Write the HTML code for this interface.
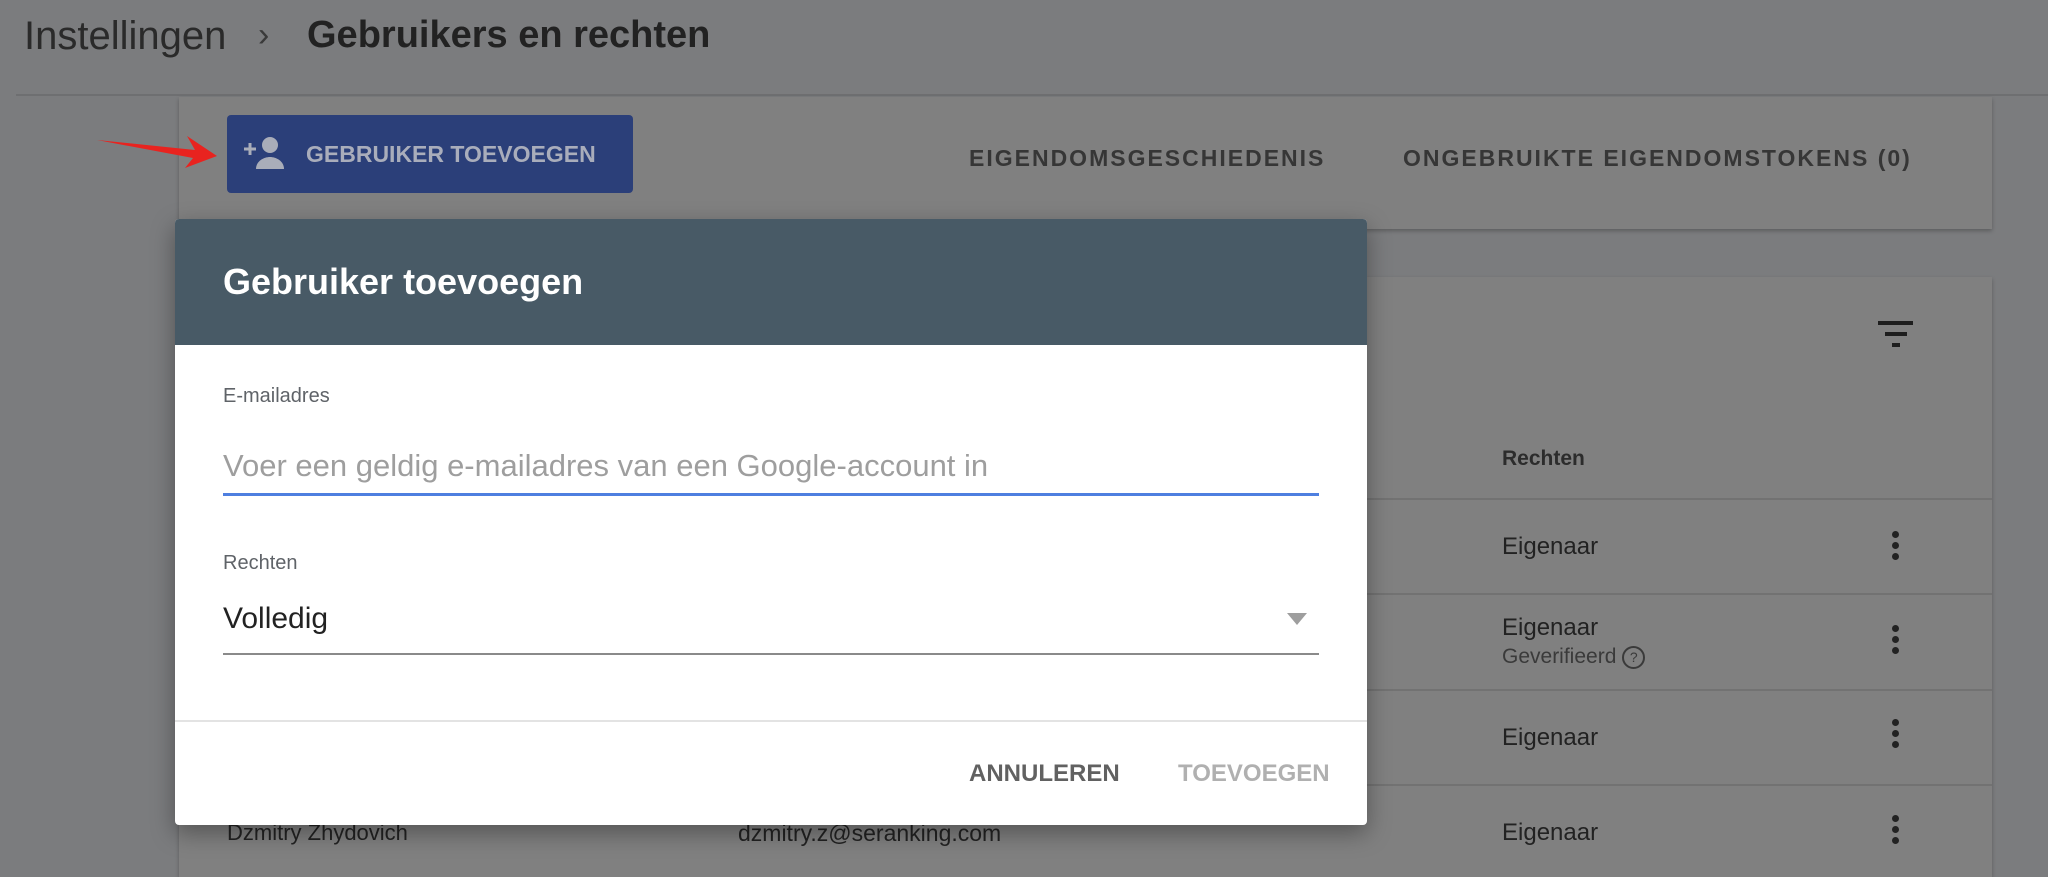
<!DOCTYPE html>
<html><head><meta charset="utf-8"><style>
*{margin:0;padding:0;box-sizing:border-box}
body{width:2048px;height:855px;overflow:hidden;background:#7b7c7e;font-family:"Liberation Sans",Arial,sans-serif;position:relative}
.a{position:absolute;white-space:nowrap}
.card{position:absolute;background:#808080;box-shadow:0 2px 4px rgba(0,0,0,.25)}
.line{position:absolute;height:2px;background:#727272}
.eig{font-size:24px;color:#222;left:1502px}
.keb{position:absolute;left:1892px;width:8px}
.keb i{display:block;width:7px;height:7px;border-radius:50%;background:#222;margin-bottom:4px}
</style></head><body>
<div class="a" style="left:24px;top:14px;font-size:40px;color:#2a2a2a">Instellingen</div>
<div class="a" style="left:258px;top:16px;font-size:34px;color:#3a3a3a">&#8250;</div>
<div class="a" style="left:307px;top:14px;font-size:38px;color:#222;font-weight:bold">Gebruikers en rechten</div>
<div style="position:absolute;left:16px;top:94px;width:2032px;height:2px;background:#6e6f71"></div>

<div class="card" style="left:179px;top:97px;width:1813px;height:132px"></div>
<div class="a" style="left:227px;top:115px;width:406px;height:78px;background:#2b3f79;border-radius:4px"></div>
<svg class="a" style="left:242px;top:135px" width="50" height="40" viewBox="0 0 50 40"><path d="M2 14h12M8 8v12" stroke="#a9adb9" stroke-width="3"/><circle cx="28" cy="10" r="8" fill="#a9adb9"/><path d="M14 34c0-8 8-12 14-12s14 4 14 12z" fill="#a9adb9"/></svg>
<div class="a" style="left:306px;top:141px;font-size:23px;color:#a9adbb;font-weight:bold">GEBRUIKER TOEVOEGEN</div>
<svg class="a" style="left:95px;top:132px" width="125" height="40" viewBox="0 0 125 40"><path d="M2 8 L100 18 L92 4 L122 24 L90 36 L98 26 Z" fill="#e8231f"/></svg>
<div class="a" style="left:969px;top:145px;font-size:23px;color:#363636;font-weight:bold;letter-spacing:2px">EIGENDOMSGESCHIEDENIS</div>
<div class="a" style="left:1403px;top:145px;font-size:23px;color:#363636;font-weight:bold;letter-spacing:2px">ONGEBRUIKTE EIGENDOMSTOKENS (0)</div>

<div class="card" style="left:179px;top:277px;width:1813px;height:600px"></div>
<div class="a" style="left:1878px;top:321px;width:35px;height:4px;background:#1e1e1e"></div>
<div class="a" style="left:1885px;top:332px;width:22px;height:4px;background:#1e1e1e"></div>
<div class="a" style="left:1892px;top:343px;width:8px;height:4px;background:#1e1e1e"></div>
<div class="a" style="left:1502px;top:447px;font-size:21px;font-weight:bold;color:#2c2c2c">Rechten</div>
<div class="line" style="left:179px;top:498px;width:1813px"></div>
<div class="line" style="left:179px;top:593px;width:1813px"></div>
<div class="line" style="left:179px;top:689px;width:1813px"></div>
<div class="line" style="left:179px;top:784px;width:1813px"></div>
<div class="a eig" style="top:533px">Eigenaar</div>
<div class="a eig" style="top:614px">Eigenaar</div>
<div class="a" style="left:1502px;top:645px;font-size:21px;color:#3a3a3a">Geverifieerd <span style="display:inline-block;width:23px;height:23px;border:2px solid #3a3a3a;border-radius:50%;font-size:14px;text-align:center;line-height:19px;vertical-align:middle">?</span></div>
<div class="a eig" style="top:724px">Eigenaar</div>
<div class="a eig" style="top:819px">Eigenaar</div>
<div class="keb" style="top:531px"><i></i><i></i><i></i></div>
<div class="keb" style="top:625px"><i></i><i></i><i></i></div>
<div class="keb" style="top:719px"><i></i><i></i><i></i></div>
<div class="keb" style="top:815px"><i></i><i></i><i></i></div>
<div class="a" style="left:227px;top:820px;font-size:22px;color:#222">Dzmitry Zhydovich</div>
<div class="a" style="left:738px;top:820px;font-size:23px;color:#222">dzmitry.z@seranking.com</div>

<div class="a" style="left:175px;top:219px;width:1192px;height:606px;background:#fff;border-radius:4px;box-shadow:0 8px 24px rgba(0,0,0,.35);overflow:hidden">
 <div style="position:absolute;left:0;top:0;width:100%;height:126px;background:#485a66"></div>
 <div class="a" style="left:48px;top:42px;font-size:36px;color:#fff;font-weight:bold">Gebruiker toevoegen</div>
 <div class="a" style="left:48px;top:166px;font-size:20px;color:#5f6368">E-mailadres</div>
 <div class="a" style="left:48px;top:229px;font-size:31px;color:#9e9e9e">Voer een geldig e-mailadres van een Google-account in</div>
 <div class="a" style="left:48px;top:274px;width:1096px;height:3px;background:#4e7fe0"></div>
 <div class="a" style="left:48px;top:333px;font-size:20px;color:#5f6368">Rechten</div>
 <div class="a" style="left:48px;top:383px;font-size:30px;color:#222">Volledig</div>
 <div class="a" style="left:1112px;top:394px;width:0;height:0;border-left:10px solid transparent;border-right:10px solid transparent;border-top:12px solid #9e9e9e"></div>
 <div class="a" style="left:48px;top:434px;width:1096px;height:2px;background:#8a8a8a"></div>
 <div class="a" style="left:0;top:501px;width:100%;height:2px;background:#e3e3e3"></div>
 <div class="a" style="left:794px;top:541px;font-size:24px;color:#616161;font-weight:bold">ANNULEREN</div>
 <div class="a" style="left:1003px;top:541px;font-size:24px;color:#b0b0b0;font-weight:bold">TOEVOEGEN</div>
</div>
</body></html>
